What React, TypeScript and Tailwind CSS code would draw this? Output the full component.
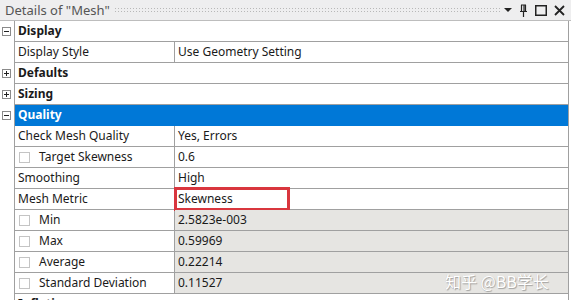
import React from "react";

type Row =
  | { kind: "group"; label: string; open: boolean; selected?: boolean }
  | { kind: "prop"; label: string; value: string; check?: boolean; gray?: boolean; red?: boolean };

const rows: Row[] = [
  { kind: "group", label: "Display", open: true },
  { kind: "prop", label: "Display Style", value: "Use Geometry Setting" },
  { kind: "group", label: "Defaults", open: false },
  { kind: "group", label: "Sizing", open: false },
  { kind: "group", label: "Quality", open: true, selected: true },
  { kind: "prop", label: "Check Mesh Quality", value: "Yes, Errors" },
  { kind: "prop", label: "Target Skewness", value: "0.6", check: true },
  { kind: "prop", label: "Smoothing", value: "High" },
  { kind: "prop", label: "Mesh Metric", value: "Skewness", red: true },
  { kind: "prop", label: "Min", value: "2.5823e-003", check: true, gray: true },
  { kind: "prop", label: "Max", value: "0.59969", check: true, gray: true },
  { kind: "prop", label: "Average", value: "0.22214", check: true, gray: true },
  { kind: "prop", label: "Standard Deviation", value: "0.11527", check: true, gray: true },
  { kind: "group", label: "Inflation", open: false },
];

function Toggle({ open }: { open: boolean }) {
  return (
    <div className="relative w-[9px] h-[9px] border border-[#8a8a8a] bg-white">
      <div className="absolute left-[1px] right-[1px] top-[3px] h-px bg-[#222]" />
      {!open && <div className="absolute top-[1px] bottom-[1px] left-[3px] w-px bg-[#222]" />}
    </div>
  );
}

export default function App() {
  return (
    <div
      className="relative w-[571px] h-[300px] overflow-hidden bg-white text-[12px] text-[#1a1a1a]"
      style={{ fontFamily: '"Noto Sans", "Open Sans", sans-serif' }}
    >
      {/* title bar */}
      <div className="flex items-center h-[21px] bg-[#eeeeef] border-b border-[#bdbdbd] pl-[5px] pr-[6px]">
        <span className="text-[13px] text-[#555] leading-none whitespace-nowrap">Details of "Mesh"</span>
        <div
          className="flex-1 h-[6px] mx-[4px]"
          style={{
            backgroundImage: "radial-gradient(#b8b8b8 0.6px, transparent 0.8px)",
            backgroundSize: "3px 3px",
          }}
        />
        <div className="flex items-center gap-[7px] text-[#222]">
          <svg width="8" height="6" viewBox="0 0 8 6"><path d="M0 1h8L4 5z" fill="#222" /></svg>
          <svg width="9" height="13" viewBox="0 0 9 13">
            <path d="M2 1h5M2.5 1v6M6.5 1v6M5 1v6M1 7.5h7M4.5 8v5" stroke="#222" strokeWidth="1.2" fill="none" />
          </svg>
          <svg width="12" height="12" viewBox="0 0 12 12">
            <rect x="0.75" y="1.75" width="10.5" height="9.5" stroke="#222" strokeWidth="1.5" fill="none" />
          </svg>
          <svg width="11" height="11" viewBox="0 0 11 11">
            <path d="M1 1l9 9M10 1l-9 9" stroke="#222" strokeWidth="1.8" />
          </svg>
        </div>
      </div>

      {/* grid */}
      <div className="flex flex-col w-[569px] border-r border-[#a0a0a0]">
        {rows.map((r, i) => (
          <div key={i} className="flex h-[21px]">
            <div className="w-[15px] shrink-0 flex items-center justify-center border-r border-[#a0a0a0] pr-[1px]">
              {r.kind === "group" && <Toggle open={r.open} />}
            </div>
            {r.kind === "group" ? (
              <div
                className={
                  "flex-1 flex items-center pl-[3px] font-bold border-b " +
                  (r.selected ? "bg-[#0078d7] text-white border-[#0078d7]" : "border-[#a0a0a0]")
                }
              >
                {r.label}
              </div>
            ) : (
              <>
                <div className="w-[160px] shrink-0 flex items-center border-b border-r border-[#a0a0a0] pl-[3px] whitespace-nowrap">
                  {r.check && <div className="w-[11px] h-[11px] border border-[#c4c4c4] bg-white ml-[1px] mr-[9px]" />}
                  {r.label}
                </div>
                <div
                  className={
                    "relative flex-1 flex items-center pl-[3px] border-b border-[#a0a0a0] " +
                    (r.gray ? "bg-[#e6e5e2]" : "bg-white")
                  }
                >
                  {r.value}
                  {r.red && (
                    <div className="absolute left-[-1px] top-[-2px] w-[116px] h-[24px] border-[3px] border-[#d9363e]" />
                  )}
                </div>
              </>
            )}
          </div>
        ))}
      </div>

      {/* watermark */}
      <div
        className="absolute left-[445px] top-[269px] text-[16px] text-white whitespace-nowrap"
        style={{
          fontFamily: '"Noto Sans CJK SC", sans-serif',
          textShadow: "1px 1px 1px rgba(0,0,0,0.3), -0.5px -0.5px 0 rgba(0,0,0,0.12)",
        }}
      >
        知乎 @BB学长
      </div>
    </div>
  );
}
